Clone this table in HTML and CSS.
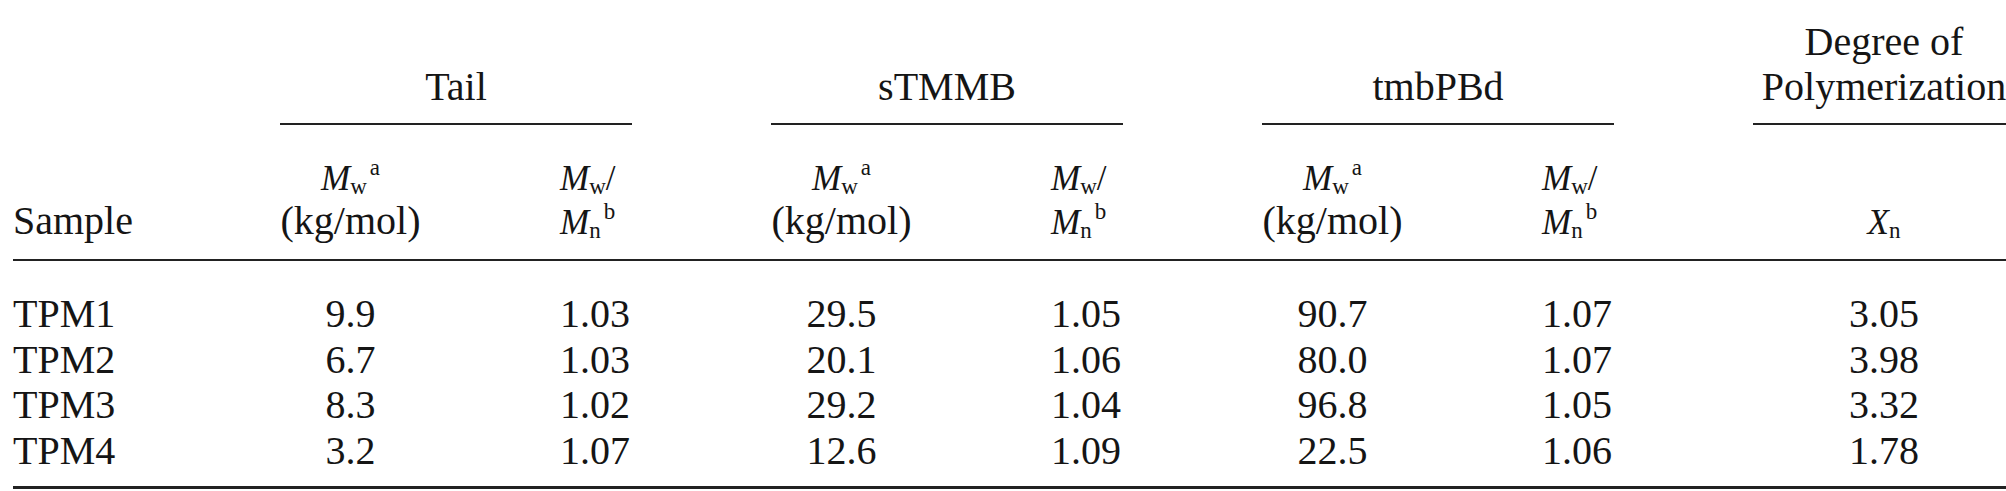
FILE: index.html
```html
<!DOCTYPE html>
<html lang="en">
<head>
    <meta charset="UTF-8">
    <meta name="viewport" content="width=device-width, initial-scale=1.0">
    <title>Polymer Samples</title>
    <link rel="stylesheet" href="styles.css">
</head>
<body>
    <div class="table">
        <!-- Group labels with their underlines -->
        <div class="row groups">
            <div class="group span-tail">Tail</div>
            <div class="group span-stmmb">sTMMB</div>
            <div class="group span-tmb">tmbPBd</div>
            <div class="group span-dp">Degree of<br>Polymerization</div>
        </div>

        <!-- Column headings -->
        <div class="row heads">
            <div class="cell">Sample</div>
            <div class="cell center"><i>M</i><sub>w</sub><sup>a</sup><br>(kg/mol)</div>
            <div class="cell"><i>M</i><sub>w</sub><span class="slash">/</span><br><i>M</i><sub>n</sub><sup>b</sup></div>
            <div class="cell center"><i>M</i><sub>w</sub><sup>a</sup><br>(kg/mol)</div>
            <div class="cell"><i>M</i><sub>w</sub><span class="slash">/</span><br><i>M</i><sub>n</sub><sup>b</sup></div>
            <div class="cell center"><i>M</i><sub>w</sub><sup>a</sup><br>(kg/mol)</div>
            <div class="cell"><i>M</i><sub>w</sub><span class="slash">/</span><br><i>M</i><sub>n</sub><sup>b</sup></div>
            <div class="cell center"><i>X</i><sub>n</sub></div>
        </div>

        <!-- Data -->
        <div class="data">
            <div class="row">
                <div class="cell">TPM1</div>
                <div class="cell center">9.9</div>
                <div class="cell">1.03</div>
                <div class="cell center">29.5</div>
                <div class="cell">1.05</div>
                <div class="cell center">90.7</div>
                <div class="cell">1.07</div>
                <div class="cell center">3.05</div>
            </div>
            <div class="row">
                <div class="cell">TPM2</div>
                <div class="cell center">6.7</div>
                <div class="cell">1.03</div>
                <div class="cell center">20.1</div>
                <div class="cell">1.06</div>
                <div class="cell center">80.0</div>
                <div class="cell">1.07</div>
                <div class="cell center">3.98</div>
            </div>
            <div class="row">
                <div class="cell">TPM3</div>
                <div class="cell center">8.3</div>
                <div class="cell">1.02</div>
                <div class="cell center">29.2</div>
                <div class="cell">1.04</div>
                <div class="cell center">96.8</div>
                <div class="cell">1.05</div>
                <div class="cell center">3.32</div>
            </div>
            <div class="row">
                <div class="cell">TPM4</div>
                <div class="cell center">3.2</div>
                <div class="cell">1.07</div>
                <div class="cell center">12.6</div>
                <div class="cell">1.09</div>
                <div class="cell center">22.5</div>
                <div class="cell">1.06</div>
                <div class="cell center">1.78</div>
            </div>
        </div>
    </div>
</body>
</html>
```

FILE: styles.css
```css
/* Journal style table, serif type and plain rules */
body {
    margin: 0;
    background-color: #fff;
    color: #151515;
    font-family: "Liberation Serif", "DejaVu Serif", serif;
    font-size: 40px;
    overflow: hidden;
}
.table {
    width: 2002px;
    margin-left: 13px;
    padding-top: 19px;
}
.row {
    display: grid;
    grid-template-columns: 128px 141px 72px 141px 72px 141px 72px 262px;
    column-gap: 139px;
}
.cell {
    white-space: nowrap;
}
.center {
    text-align: center;
}

/* group labels */
.group {
    align-self: end;
    text-align: center;
    line-height: 45px;
    padding-bottom: 14px;
    border-bottom: 2px solid #222;
    white-space: nowrap;
}
.span-tail {
    grid-column: 2 / 4;
}
.span-stmmb {
    grid-column: 4 / 6;
}
.span-tmb {
    grid-column: 6 / 8;
}
.span-dp {
    grid-column: 8 / 9;
}

/* column headings */
.heads {
    padding: 30px 0 16px;
    border-bottom: 2px solid #222;
}
.heads .cell {
    align-self: end;
    line-height: 44px;
}
i {
    font-size: 35px;
    line-height: 1;
}
sub, sup {
    font-size: 23px;
    line-height: 0;
}
sub {
    vertical-align: -4px;
}
sup {
    vertical-align: 15px;
    margin-left: 3px;
}
.slash {
    font-size: 35px;
    line-height: 1;
}

/* data rows */
.data {
    padding: 30px 0 13px;
    border-bottom: 3px solid #222;
}
.data .cell {
    line-height: 45.5px;
}
```
